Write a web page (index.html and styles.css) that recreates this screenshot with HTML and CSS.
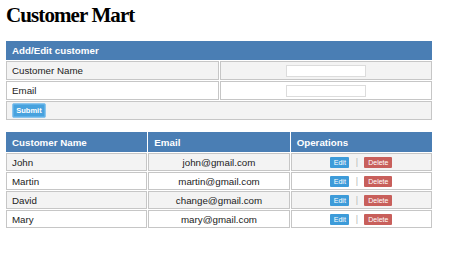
FILE: index.html
```html
<!DOCTYPE html>
<html>
<head>
<meta charset="utf-8">
<title>Customer Mart</title>
<link rel="stylesheet" href="styles.css">
</head>
<body>
<div class="page">
  <h1 class="title">Customer Mart</h1>
  <table class="grid form">
    <thead>
      <tr><th colspan="2">Add/Edit customer</th></tr>
    </thead>
    <tbody>
      <tr class="alt">
        <td class="label">Customer Name</td>
        <td class="field"><input class="text-input" type="text"></td>
      </tr>
      <tr>
        <td class="label">Email</td>
        <td class="field"><input class="text-input" type="text"></td>
      </tr>
      <tr class="alt">
        <td colspan="2" class="actions"><button class="btn-submit" type="button">Submit</button></td>
      </tr>
    </tbody>
  </table>

  <table class="grid list">
    <thead>
      <tr><th>Customer Name</th><th>Email</th><th>Operations</th></tr>
    </thead>
    <tbody>
      <tr class="alt"><td>John</td><td class="email">john@gmail.com</td><td class="ops"><span class="btn edit">Edit</span><span class="sep">|</span><span class="btn delete">Delete</span></td></tr>
      <tr><td>Martin</td><td class="email">martin@gmail.com</td><td class="ops"><span class="btn edit">Edit</span><span class="sep">|</span><span class="btn delete">Delete</span></td></tr>
      <tr class="alt"><td>David</td><td class="email">change@gmail.com</td><td class="ops"><span class="btn edit">Edit</span><span class="sep">|</span><span class="btn delete">Delete</span></td></tr>
      <tr><td>Mary</td><td class="email">mary@gmail.com</td><td class="ops"><span class="btn edit">Edit</span><span class="sep">|</span><span class="btn delete">Delete</span></td></tr>
    </tbody>
  </table>
</div>
</body>
</html>
```

FILE: styles.css
```css
html, body {
  margin: 0;
  padding: 0;
  background: #ffffff;
}

.page {
  padding: 0 5px;
  font-family: "Liberation Sans", Arial, sans-serif;
  font-size: 9.75px;
  color: #222222;
}

.title {
  font-family: "Liberation Serif", "Times New Roman", serif;
  font-size: 21px;
  font-weight: bold;
  letter-spacing: -0.9px;
  line-height: 23px;
  margin: 4px 0 13px 1px;
  color: #000000;
}

.grid {
  width: 428px;
  border-collapse: separate;
  border-spacing: 1px;
  table-layout: fixed;
}

.grid th,
.grid td {
  box-sizing: border-box;
  padding: 0 5px;
  text-align: left;
  vertical-align: middle;
}

.grid th {
  height: 19px;
  background: #4a7eb4;
  border: 1px solid #4a7eb4;
  color: #ffffff;
  font-weight: bold;
}

.grid td {
  height: 19px;
  border: 1px solid #c6c6c6;
  background: #ffffff;
}

.grid tr.alt td {
  background: #f3f3f3;
}

.form .field {
  text-align: center;
}

.text-input {
  box-sizing: border-box;
  width: 80px;
  height: 12px;
  border: 1px solid #dcdcdc;
  background: #ffffff;
  padding: 0;
  margin: 0;
  vertical-align: middle;
}

.actions {
  padding-left: 4px;
}

.btn-submit {
  box-sizing: border-box;
  width: 34px;
  height: 15px;
  padding: 0;
  margin: 0;
  border: 1px solid #8cc6ee;
  border-radius: 2px;
  background: #48a2de;
  box-shadow: inset 0 0 0 1px #5fb0e6;
  color: #ffffff;
  font-family: "Liberation Sans", Arial, sans-serif;
  font-size: 7.5px;
  font-weight: bold;
  vertical-align: middle;
}

.form {
  margin-bottom: 10px;
}

.list th {
  height: 20px;
}

.list td {
  height: 18px;
}

.list .email {
  text-align: center;
}

.list .ops {
  text-align: center;
  font-size: 0;
}

.btn {
  display: inline-block;
  vertical-align: middle;
  height: 11px;
  line-height: 11px;
  font-size: 7px;
  color: #ffffff;
  border-radius: 1px;
  text-align: center;
}

.btn.edit {
  width: 19px;
  background: #3d9bd9;
}

.btn.delete {
  width: 28px;
  background: #c85f5b;
}

.sep {
  display: inline-block;
  vertical-align: middle;
  width: 15px;
  font-size: 9px;
  line-height: 11px;
  color: #b8b8b8;
  text-align: center;
}
```
